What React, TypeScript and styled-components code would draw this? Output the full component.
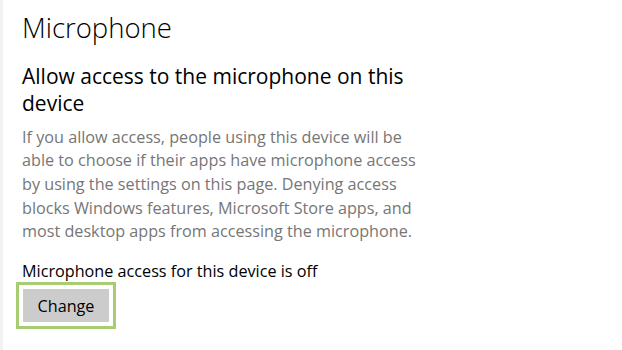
import React from "react";
import styled, { createGlobalStyle } from "styled-components";

const GlobalStyle = createGlobalStyle`
  html, body {
    margin: 0;
    padding: 0;
    background: #ffffff;
  }
  body {
    font-family: "Open Sans", "Noto Sans", sans-serif;
  }
`;

const Page = styled.div`
  display: flex;
  width: 622px;
  height: 350px;
  overflow: hidden;
  background: #ffffff;
`;

const Rail = styled.div`
  width: 3px;
  flex-shrink: 0;
  background: #f2f2f2;
`;

const Content = styled.main`
  display: flex;
  flex-direction: column;
  padding: 9px 0 0 19px;
  width: 428px;
`;

const Title = styled.h1`
  margin: 0;
  font-size: 27.5px;
  font-weight: 300;
  line-height: 38px;
  color: #000000;
`;

const Heading = styled.h2`
  margin: 16px 0 0;
  font-size: 21px;
  font-weight: 400;
  line-height: 27px;
  color: #000000;
`;

const Description = styled.p`
  margin: 8.5px 0 0;
  max-width: 403px;
  font-size: 16.2px;
  line-height: 23.7px;
  color: #767676;
`;

const Status = styled.p`
  margin: 16px 0 0;
  font-size: 16.2px;
  line-height: 22px;
  color: #000000;
`;

const FocusRing = styled.div`
  align-self: flex-start;
  margin: 0 0 0 -6px;
  padding: 4px;
  border: 3px solid #a8cc72;
`;

const Button = styled.button`
  display: block;
  width: 86px;
  height: 33px;
  padding: 0;
  border: none;
  background: #cccccc;
  font-family: inherit;
  font-size: 16.2px;
  color: #000000;
  cursor: pointer;
`;

export default function App() {
  return (
    <Page>
      <GlobalStyle />
      <Rail />
      <Content>
        <Title>Microphone</Title>
        <Heading>Allow access to the microphone on this device</Heading>
        <Description>
          If you allow access, people using this device will be able to choose
          if their apps have microphone access by using the settings on this
          page. Denying access blocks Windows features, Microsoft Store apps,
          and most desktop apps from accessing the microphone.
        </Description>
        <Status>Microphone access for this device is off</Status>
        <FocusRing>
          <Button>Change</Button>
        </FocusRing>
      </Content>
    </Page>
  );
}
